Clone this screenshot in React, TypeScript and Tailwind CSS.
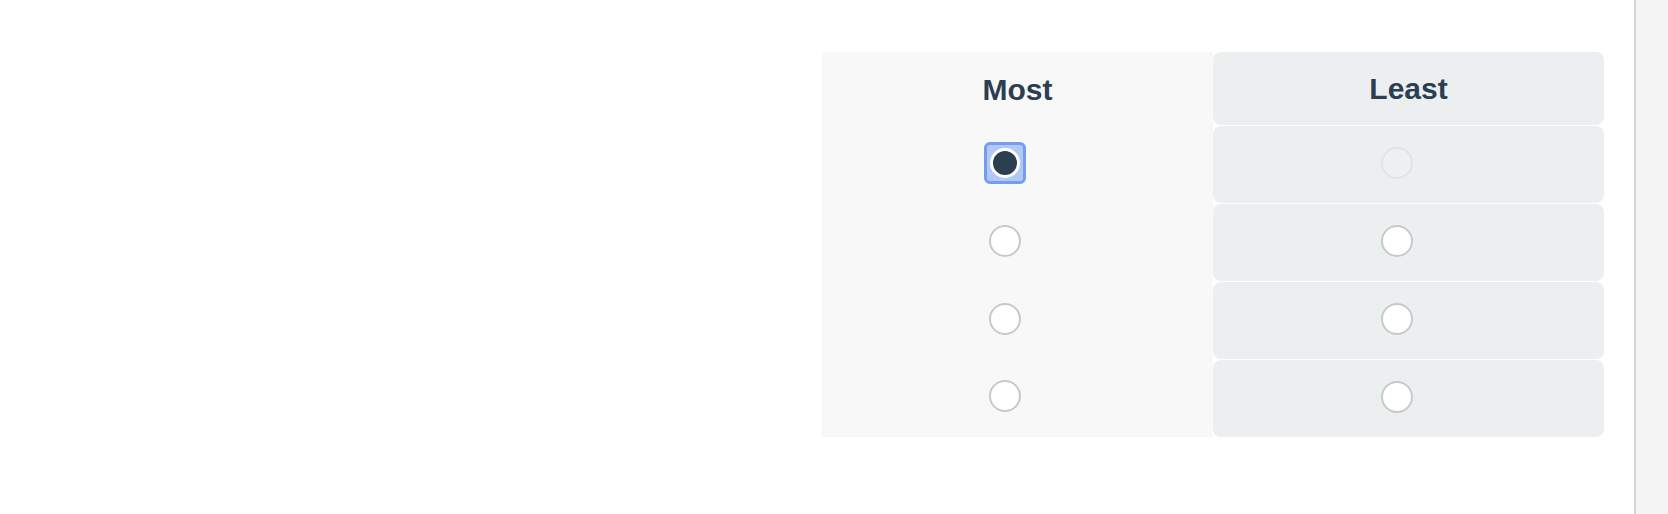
import { useState } from 'react';

const rows = [0, 1, 2, 3];

function Radio({ checked, disabled }: { checked?: boolean; disabled?: boolean }) {
  if (checked) {
    return (
      <span className="flex h-[42px] w-[42px] items-center justify-center rounded-[6px] border-[3px] border-[#739ded] bg-[#b3c9f5]">
        <span className="block h-[30px] w-[30px] rounded-full border-[3px] border-white bg-[#2c3e50]" />
      </span>
    );
  }
  return (
    <span
      className={`block h-8 w-8 rounded-full border-2 ${
        disabled ? 'border-[#dfe4e6] bg-[#eef1f2]' : 'border-[#c9c9c9] bg-white'
      }`}
    />
  );
}

export default function App() {
  const [most] = useState(0);
  const [least] = useState<number | null>(null);

  return (
    <div className="flex h-[514px] w-full bg-white" style={{ fontFamily: '"Liberation Sans", Arial, sans-serif' }}>
      <main className="flex flex-1 justify-end pt-[52px] pr-[30px]">
        <div className="grid h-fit w-[782px] grid-cols-2">
          {/* Most column */}
          <div className="flex flex-col bg-[#f8f8f8]">
            <div className="flex h-[74px] items-center justify-center">
              <h3 className="text-[30px] font-bold text-[#2c3e50]">Most</h3>
            </div>
            {rows.map((r) => (
              <div key={r} className={`flex items-center justify-center pr-[25px] pb-[5px] ${r === 3 ? 'h-[77px]' : 'h-[78px]'}`}>
                <Radio checked={most === r} />
              </div>
            ))}
          </div>

          {/* Least column */}
          <div className="flex flex-col gap-px">
            <div className="flex h-[73px] items-center justify-center rounded-lg bg-[#ebeff0]">
              <h3 className="text-[30px] font-bold text-[#2c3e50]">Least</h3>
            </div>
            {rows.map((r) => (
              <div key={r} className="flex h-[77px] items-center justify-center rounded-lg bg-[#ebeff0] pr-[23px] pb-[3px]">
                <Radio checked={least === r} disabled={most === r} />
              </div>
            ))}
          </div>
        </div>
      </main>

      {/* Scrollbar */}
      <div className="h-full w-[34px] border-l-2 border-[#d6d6d6] bg-[#f4f4f4]" />
    </div>
  );
}
